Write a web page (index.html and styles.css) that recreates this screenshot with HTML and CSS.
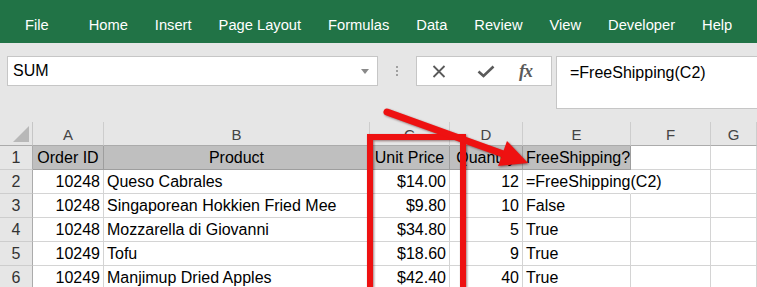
FILE: index.html
```html
<!DOCTYPE html>
<html lang="en">
<head>
    <meta charset="UTF-8">
    <title>FreeShipping</title>
    <link rel="stylesheet" href="styles.css">
</head>
<body>
    <div class="ribbon">
        <span class="tab tab-file">File</span>
        <span class="tab">Home</span>
        <span class="tab">Insert</span>
        <span class="tab">Page Layout</span>
        <span class="tab">Formulas</span>
        <span class="tab">Data</span>
        <span class="tab">Review</span>
        <span class="tab">View</span>
        <span class="tab">Developer</span>
        <span class="tab">Help</span>
    </div>

    <div class="formula-bar">
        <div class="name-box">
            <span>SUM</span>
            <svg class="caret" width="8" height="5" viewBox="0 0 8 5"><path d="M0 0 L8 0 L4 5 Z" fill="#8a8a8a"/></svg>
        </div>
        <div class="grip"><i></i><i></i><i></i></div>
        <div class="fn-box">
            <svg class="icon" width="14" height="13" viewBox="0 0 14 13"><path d="M1.5 1 L12.5 12 M12.5 1 L1.5 12" stroke="#5a5a5a" stroke-width="1.8" fill="none"/></svg>
            <svg class="icon icon-check" width="18" height="13" viewBox="0 0 18 13"><path d="M1.5 6.5 L6.5 11 L16.5 1.5" stroke="#5a5a5a" stroke-width="2.6" fill="none"/></svg>
            <span class="fx">fx</span>
        </div>
        <div class="formula">=FreeShipping(C2)</div>
    </div>

    <div class="sheet">
        <div class="corner"><svg width="16" height="16" viewBox="0 0 16 16"><path d="M16 0 L16 16 L0 16 Z" fill="#b8b8b8"/></svg></div>
        <div class="col-head">A</div>
        <div class="col-head">B</div>
        <div class="col-head">C</div>
        <div class="col-head">D</div>
        <div class="col-head">E</div>
        <div class="col-head">F</div>
        <div class="col-head">G</div>

        <div class="row-head">1</div>
        <div class="cell title center">Order ID</div>
        <div class="cell title center">Product</div>
        <div class="cell title center">Unit Price</div>
        <div class="cell title center">Quantity</div>
        <div class="cell title">FreeShipping?</div>
        <div class="cell"></div>
        <div class="cell"></div>

        <div class="row-head">2</div>
        <div class="cell num">10248</div>
        <div class="cell">Queso Cabrales</div>
        <div class="cell num">$14.00</div>
        <div class="cell num">12</div>
        <div class="cell spill">=FreeShipping(C2)</div>
        <div class="cell"></div>
        <div class="cell"></div>

        <div class="row-head">3</div>
        <div class="cell num">10248</div>
        <div class="cell">Singaporean Hokkien Fried Mee</div>
        <div class="cell num">$9.80</div>
        <div class="cell num">10</div>
        <div class="cell">False</div>
        <div class="cell"></div>
        <div class="cell"></div>

        <div class="row-head">4</div>
        <div class="cell num">10248</div>
        <div class="cell">Mozzarella di Giovanni</div>
        <div class="cell num">$34.80</div>
        <div class="cell num">5</div>
        <div class="cell">True</div>
        <div class="cell"></div>
        <div class="cell"></div>

        <div class="row-head">5</div>
        <div class="cell num">10249</div>
        <div class="cell">Tofu</div>
        <div class="cell num">$18.60</div>
        <div class="cell num">9</div>
        <div class="cell">True</div>
        <div class="cell"></div>
        <div class="cell"></div>

        <div class="row-head">6</div>
        <div class="cell num">10249</div>
        <div class="cell">Manjimup Dried Apples</div>
        <div class="cell num">$42.40</div>
        <div class="cell num">40</div>
        <div class="cell">True</div>
        <div class="cell"></div>
        <div class="cell"></div>
    </div>

    <!-- red callouts drawn over the sheet -->
    <svg class="markup" width="757" height="287" viewBox="0 0 757 287">
        <rect x="370" y="137" width="93" height="200" fill="none" stroke="#ee1111" stroke-width="6"/>
        <line x1="387" y1="112" x2="506" y2="155" stroke="#ee1111" stroke-width="7" stroke-linecap="round"/>
        <polygon points="528,163 498,166 507,141" fill="#ee1111"/>
    </svg>
</body>
</html>
```

FILE: styles.css
```css
body {
    margin: 0;
    width: 757px;
    height: 287px;
    overflow: hidden;
    position: relative;
    background-color: #e6e6e6;
    font-family: "Liberation Sans", Arial, sans-serif;
    color: #000;
}
.ribbon {
    height: 43px;
    box-sizing: border-box;
    padding: 7px 0 0 25px;
    display: flex;
    align-items: center;
    gap: 27px;
    background-color: #217346;
    color: #fff;
    font-size: 14.7px;
}
.tab-file {
    margin-right: 13px;
}
.formula-bar {
    height: 79px;
    box-sizing: border-box;
    padding: 13px 0 0 7px;
    display: flex;
    align-items: flex-start;
}
.name-box {
    width: 371px;
    height: 30px;
    box-sizing: border-box;
    border: 1px solid #c6c6c6;
    background-color: #fff;
    padding: 0 8px 0 5px;
    display: flex;
    align-items: center;
    justify-content: space-between;
    font-size: 16px;
    line-height: 28px;
}
.grip {
    width: 38px;
    height: 30px;
    display: flex;
    flex-direction: column;
    align-items: center;
    justify-content: center;
    gap: 2px;
}
.grip i {
    width: 2px;
    height: 2px;
    background-color: #a0a0a0;
}
.fn-box {
    width: 136px;
    height: 30px;
    box-sizing: border-box;
    border: 1px solid #c6c6c6;
    background-color: #fff;
    padding-left: 15px;
    display: flex;
    align-items: center;
}
.icon-check {
    margin-left: 31px;
}
.fx {
    margin-left: 24px;
    font-family: "Liberation Serif", "Times New Roman", serif;
    font-style: italic;
    font-weight: bold;
    font-size: 18px;
    color: #5a5a5a;
    letter-spacing: -1px;
}
.formula {
    flex: 1;
    margin: 0 -10px 0 4px;
    height: 53px;
    box-sizing: border-box;
    border: 1px solid #c6c6c6;
    background-color: #fff;
    padding: 4px 13px;
    font-size: 16px;
    line-height: 24px;
}
.sheet {
    display: grid;
    grid-template-columns: 33px 71px 266px 80px 73px 108px 80px 1fr;
    grid-auto-rows: 24px;
    font-size: 16px;
    line-height: 24px;
}
.corner {
    border-right: 1px solid #c6c6c6;
    border-bottom: 1px solid #ababab;
    display: flex;
    align-items: flex-end;
    justify-content: flex-end;
    padding: 0 3px 3px 0;
}
.col-head {
    border-right: 1px solid #cdcdcd;
    border-bottom: 1px solid #ababab;
    text-align: center;
    color: #444;
    font-size: 15px;
    line-height: 26px;
}
.row-head {
    border-right: 1px solid #ababab;
    border-bottom: 1px solid #cdcdcd;
    text-align: center;
    color: #333;
}
.cell {
    background-color: #fff;
    border-right: 1px solid #d4d4d4;
    border-bottom: 1px solid #d4d4d4;
    padding: 0 3px;
    white-space: nowrap;
    overflow: hidden;
}
.title {
    background-color: #bfbfbf;
    border-right-color: #9e9e9e;
    border-bottom-color: #9e9e9e;
}
.center {
    text-align: center;
}
.num {
    text-align: right;
}
.spill {
    overflow: visible;
    border-right-color: #fff;
    position: relative;
    z-index: 1;
}
.markup {
    position: absolute;
    top: 0;
    left: 0;
    pointer-events: none;
    filter: drop-shadow(1px 1px 1px rgba(60, 0, 0, 0.5));
}
```
